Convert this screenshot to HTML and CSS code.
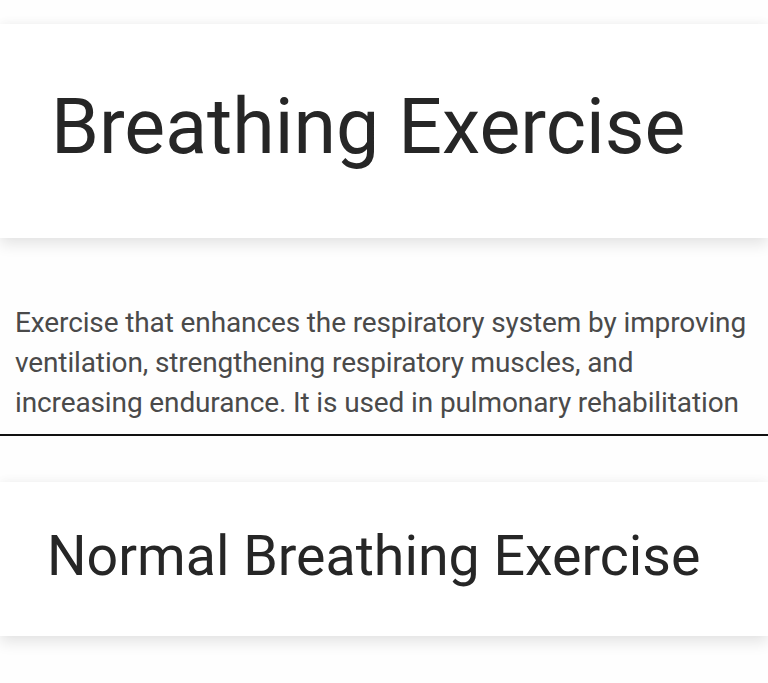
FILE: index.html
```html
<!DOCTYPE html>
<html>
<head>
<meta charset="utf-8">
<link rel="stylesheet" href="styles.css">
</head>
<body>
<div class="page">
  <div class="card card-main">
    <h1 class="title">Breathing Exercise</h1>
  </div>
  <div class="desc">
    <p class="desc-text">Exercise that enhances the respiratory system by improving ventilation, strengthening respiratory muscles, and increasing endurance. It is used in pulmonary rehabilitation</p>
  </div>
  <div class="card card-sub">
    <h2 class="subtitle">Normal Breathing Exercise</h2>
  </div>
</div>
</body>
</html>
```
FILE: styles.css
```css
html, body {
  margin: 0;
  padding: 0;
  background: #fefefe;
}
.page {
  display: flex;
  flex-direction: column;
  padding-top: 24px;
  padding-bottom: 40px;
  font-family: Roboto, "Noto Sans", sans-serif;
}
.card {
  background: #fff;
  box-shadow: 0 6px 14px rgba(0, 0, 0, 0.11), 0 -3px 10px rgba(0, 0, 0, 0.025);
  display: flex;
  align-items: center;
  position: relative;
  z-index: 1;
}
.card-main {
  height: 214px;
  padding-left: 51px;
}
.title {
  margin: 0;
  font-weight: 400;
  font-size: 77px;
  color: #262626;
  line-height: 1;
  margin-top: -8px;
}
.desc {
  padding: 65px 15px 11px 15px;
  border-bottom: 2px solid #111;
}
.desc-text {
  margin: 0;
  font-size: 28px;
  line-height: 40px;
  color: #4a4a4a;
  width: 745px;
  letter-spacing: -0.12px;
}
.card-sub {
  margin-top: 46px;
  height: 154px;
  padding-left: 47px;
}
.subtitle {
  margin: 0;
  font-weight: 400;
  font-size: 55.5px;
  color: #262626;
  line-height: 1;
  margin-top: -4px;
}
```
